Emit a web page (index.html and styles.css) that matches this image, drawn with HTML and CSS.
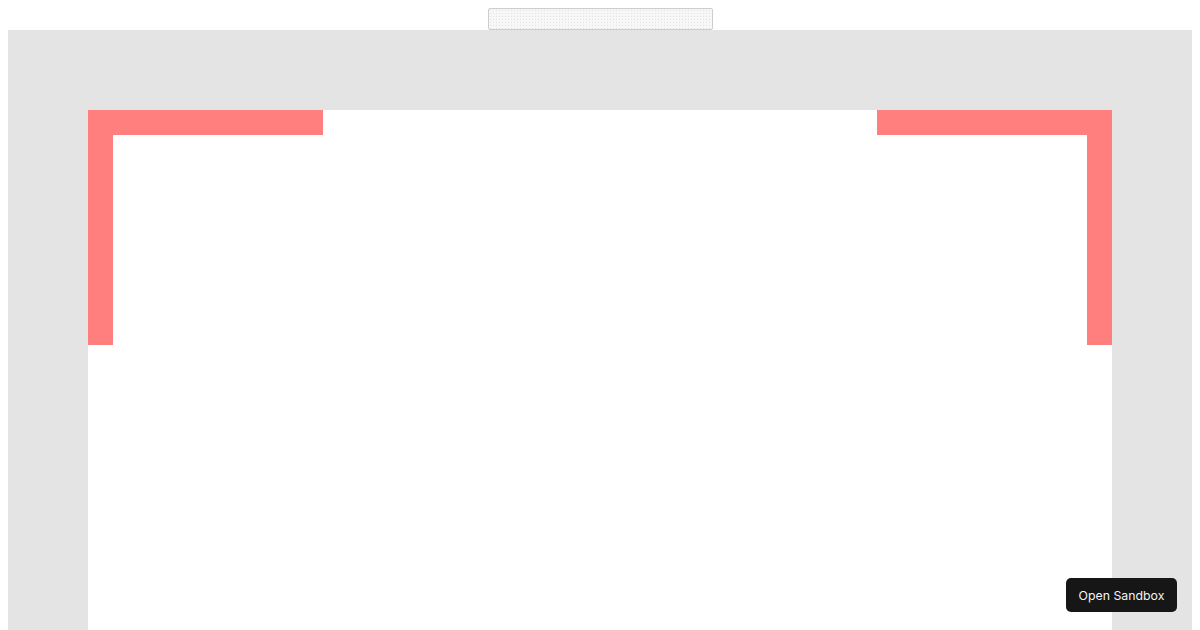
FILE: index.html
```html
<!DOCTYPE html>
<html>
<head>
<meta charset="utf-8">
<link rel="stylesheet" href="styles.css">
</head>
<body>
<div class="top"><div class="field"></div></div>
<div class="stage">
  <div class="canvas">
    <div class="corners">
      <div class="corner left"></div>
      <div class="corner right"></div>
    </div>
  </div>
</div>
<button class="sandbox">Open Sandbox</button>
</body>
</html>
```
FILE: styles.css
```css
html { height: 100%; overflow: hidden; }
body {
  margin: 8px 8px 0 8px;
  font-family: "Inter", "Liberation Sans", sans-serif;
  background: #fff;
}
.top {
  display: flex;
  justify-content: center;
  height: 22px;
}
.field {
  width: 223px;
  height: 20px;
  border: 1px solid #cccccc;
  border-radius: 2px;
  background-color: #f7f7f7;
  background-image: radial-gradient(#e2e2e2 0.6px, transparent 0.7px);
  background-size: 3px 3px;
}
.stage {
  background: #e4e4e4;
  padding: 80px 80px 0 80px;
  height: 520px;
}
.canvas {
  background: #fff;
  height: 100%;
}
.corners {
  display: flex;
  justify-content: space-between;
}
.corner {
  width: 210px;
  height: 210px;
  border-top: 25px solid #ff7f7f;
}
.corner.left { border-left: 25px solid #ff7f7f; }
.corner.right { border-right: 25px solid #ff7f7f; }
.sandbox {
  position: fixed;
  right: 23px;
  bottom: 18px;
  width: 111px;
  height: 34px;
  background: #161616;
  color: #f4f4f4;
  border: none;
  border-radius: 5px;
  font-family: "Inter", "Liberation Sans", sans-serif;
  font-size: 12.3px;
  padding: 0;
}
```
